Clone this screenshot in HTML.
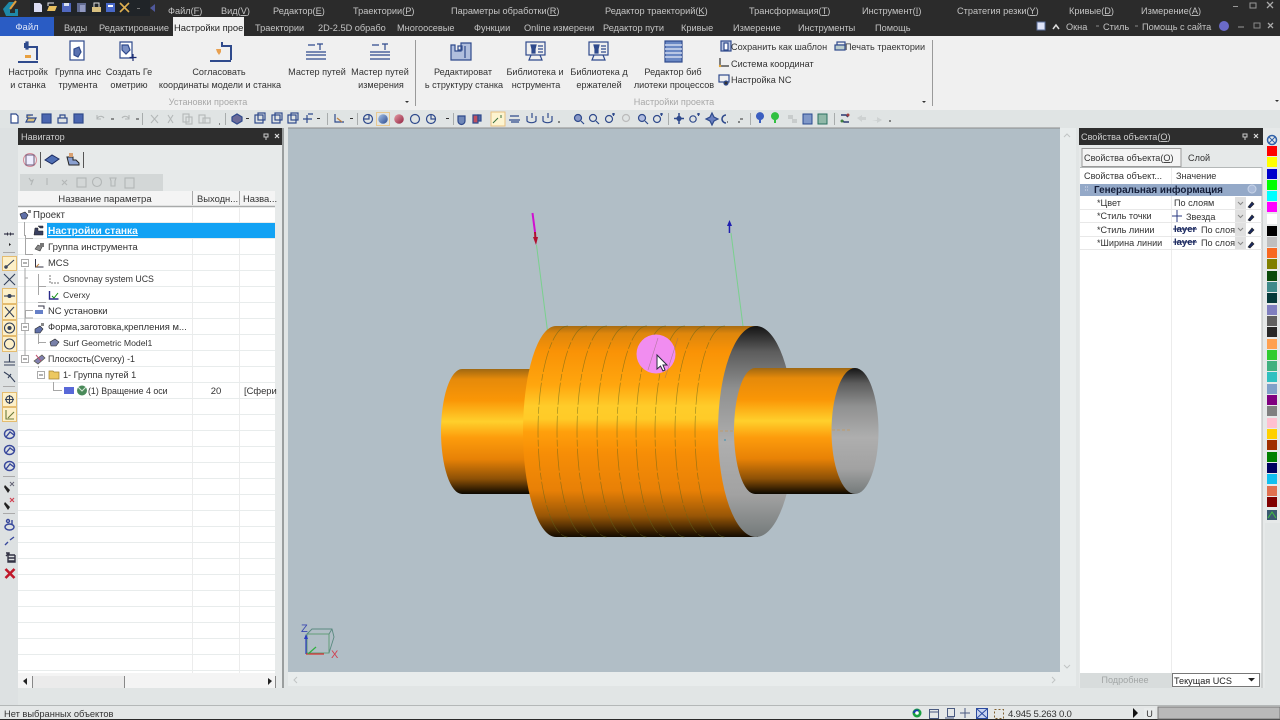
<!DOCTYPE html>
<html><head><meta charset="utf-8"><style>
html,body{margin:0;padding:0;width:1280px;height:720px;overflow:hidden;background:#e1e5e5}
svg{display:block;filter:blur(.35px)}
text{font-family:"Liberation Sans","Noto Sans CJK SC",sans-serif;font-size:9.1px;fill:#333}
.m text{fill:#c4c4c4;font-size:9.2px}
.c{text-anchor:middle}
.ic{fill:none;stroke:#2f4a8c;stroke-width:1.2}
.g{fill:none;stroke:#5a6a8a;stroke-width:1}
.dis{fill:none;stroke:#b4b8b8;stroke-width:1.1}
.u{text-decoration:underline}
</style></head><body>
<svg width="1280" height="720" viewBox="0 0 1280 720" xmlns="http://www.w3.org/2000/svg">
<defs>
<linearGradient id="body" x1="0" y1="0" x2="0" y2="1">
<stop offset="0" stop-color="#a86c12"/><stop offset=".035" stop-color="#de860c"/><stop offset=".12" stop-color="#f99206"/><stop offset=".28" stop-color="#ffa60e"/><stop offset=".38" stop-color="#ffcc2a"/><stop offset=".44" stop-color="#ffcb28"/><stop offset=".5" stop-color="#ffa00c"/><stop offset=".6" stop-color="#f78e06"/><stop offset=".78" stop-color="#e88006"/><stop offset=".9" stop-color="#985606"/><stop offset="1" stop-color="#120a00"/>
</linearGradient>
<linearGradient id="shaft" x1="0" y1="0" x2="0" y2="1">
<stop offset="0" stop-color="#a06812"/><stop offset=".08" stop-color="#e68a0a"/><stop offset=".25" stop-color="#fa9606"/><stop offset=".42" stop-color="#ffd02c"/><stop offset=".55" stop-color="#fd9c0c"/><stop offset=".72" stop-color="#e88206"/><stop offset=".88" stop-color="#8c5006"/><stop offset="1" stop-color="#0c0800"/>
</linearGradient>
<linearGradient id="face" x1="0" y1="0" x2="0" y2="1">
<stop offset="0" stop-color="#141414"/><stop offset=".12" stop-color="#5c5c5c"/><stop offset=".3" stop-color="#8f9090"/><stop offset=".55" stop-color="#aeaeae"/><stop offset=".8" stop-color="#a2a2a2"/><stop offset="1" stop-color="#747a7a"/>
</linearGradient>
<linearGradient id="ball" x1="0" y1="0" x2="1" y2="1"><stop offset="0" stop-color="#aac4e8"/><stop offset="1" stop-color="#2a4a90"/></linearGradient>
<linearGradient id="ball2" x1="0" y1="0" x2="1" y2="1"><stop offset="0" stop-color="#e8a0a8"/><stop offset="1" stop-color="#902040"/></linearGradient>
</defs>

<!-- backgrounds -->
<rect width="1280" height="720" fill="#e1e5e5"/>
<rect width="1280" height="36" fill="#2b2b2b"/>
<rect y="36" width="1280" height="74" fill="#f0f0f0"/>
<rect y="110" width="1280" height="18" fill="#e0e4e4"/>

<!-- title bar -->
<path d="M3 9 L9 2 H16 L10 9 V13 H15 V9 H18 V16 H6 Z" fill="#1e88a8"/>
<path d="M10 9 L16 1" stroke="#e0a040" stroke-width="2"/>
<rect x="30" y="0" width="120" height="16" fill="#202428"/>
<g>
<path d="M34 3 H40 L42 5 V12 H34 Z" fill="#d8dcf4"/>
<path d="M47 11 L49 6 H57 L55 11 Z" fill="#e8c060"/><path d="M48 6 V3 H54" stroke="#e8e8f0" fill="none"/>
<rect x="62" y="3" width="9" height="9" fill="#5068c0"/><rect x="64" y="3" width="5" height="3" fill="#d8e0f0"/>
<rect x="77" y="3" width="9" height="9" fill="#606a90"/><rect x="80" y="5" width="5" height="7" fill="#9098c0"/>
<rect x="92" y="7" width="9" height="5" fill="#d8c080"/><path d="M94 7 V3 H99 V7" stroke="#ddd" fill="none"/>
<rect x="106" y="3" width="9" height="9" fill="#4868c8"/><rect x="108" y="5" width="5" height="2" fill="#fff"/>
<path d="M120 3 L129 12 M129 3 L120 12" stroke="#e0b050" stroke-width="1.6"/>
<path d="M150 8 L155 4 V12 Z" fill="#50589a"/>
</g>
<rect x="137" y="8" width="3" height="1" fill="#777"/>

<g class="m">
<text x="168" y="14">Файл(<tspan class="u">F</tspan>)</text>
<text x="221" y="14">Вид(<tspan class="u">V</tspan>)</text>
<text x="273" y="14">Редактор(<tspan class="u">E</tspan>)</text>
<text x="353" y="14">Траектории(<tspan class="u">P</tspan>)</text>
<text x="451" y="14">Параметры обработки(<tspan class="u">R</tspan>)</text>
<text x="605" y="14">Редактор траекторий(<tspan class="u">K</tspan>)</text>
<text x="749" y="14">Трансформация(<tspan class="u">T</tspan>)</text>
<text x="862" y="14">Инструмент(<tspan class="u">I</tspan>)</text>
<text x="957" y="14">Стратегия резки(<tspan class="u">Y</tspan>)</text>
<text x="1069" y="14">Кривые(<tspan class="u">D</tspan>)</text>
<text x="1141" y="14">Измерение(<tspan class="u">A</tspan>)</text>
<text x="64" y="31">Виды</text>
<text x="99" y="31">Редактирование</text>
<text x="255" y="31">Траектории</text>
<text x="318" y="31">2D-2.5D обрабо</text>
<text x="397" y="31">Многоосевые</text>
<text x="474" y="31">Функции</text>
<text x="524" y="31">Online измерени</text>
<text x="603" y="31">Редактор пути</text>
<text x="681" y="31">Кривые</text>
<text x="733" y="31">Измерение</text>
<text x="798" y="31">Инструменты</text>
<text x="875" y="31">Помощь</text>
<text x="1066" y="30">Окна</text>
<text x="1103" y="30">Стиль</text>
<text x="1142" y="30">Помощь с сайта</text>
</g>
<rect x="0" y="17" width="54" height="19" fill="#2a5cc4"/>
<text x="27" y="30" class="c" style="fill:#dfe6f8;font-size:9.500px">Файл</text>
<rect x="173" y="17" width="71" height="19" fill="#f0f0f0"/>
<text x="174" y="31" style="fill:#222;font-size:9.400px">Настройки прое</text>
<!-- window buttons -->
<path d="M1233 6.5h5" stroke="#999"/><rect x="1250" y="3" width="6" height="5" fill="none" stroke="#999"/>
<path d="M1267 2 l6 6 m0-6 l-6 6" stroke="#aaa" stroke-width="1.3"/>
<rect x="1037" y="22" width="8" height="8" fill="#dfe4f8" stroke="#5a6e9a" stroke-width="1"/>
<path d="M1053 29 l3-4 l3 4" stroke="#ddd" stroke-width="1.5" fill="none"/>
<circle cx="1224" cy="26" r="5" fill="#6a6ac8"/>
<path d="M1238 27h6" stroke="#999"/><rect x="1254" y="23" width="6" height="5" fill="none" stroke="#888"/>
<path d="M1268 23 l5 5 m0-5 l-5 5" stroke="#aaa" stroke-width="1.3"/>
<path d="M1096 26h3M1135 26h3" stroke="#888"/>

<!-- ribbon icons -->
<g class="ic">
<path d="M25 43 V47 H37 V60 M18 62 H38" stroke-width="2"/>
<rect x="25" y="55" width="6" height="3" fill="#e8a040" stroke="none"/><path d="M26 42h2v7h-2z" fill="#2f4a8c"/>
<rect x="70" y="41" width="14" height="19" fill="#fff"/><path d="M74 49 l5-2 l2 5 l-3 5 l-4-2 z" fill="#5a72b0"/>
<path d="M120 42 H132 V58 H120 Z" fill="#fff"/><path d="M122 45 l6 0 l2 5 l-4 4 l-4-4 z" fill="#7a90c4"/><path d="M133 54 v7 M129.500 57.500 h7" stroke="#1a2a70" stroke-width="1.200"/>
<path d="M222 42 V46 H231 V60 M210 61 H231" stroke-width="2"/><path d="M216 49 h5 v3 l-2 3 l-2-3 z" fill="#e8a050" stroke="none"/>
<path d="M308 45 h7 M306 52 h20 M306 55 h20 M306 59 h20 M320 44 v6 M317 44 h6"/>
<path d="M372 45 h7 M370 52 h20 M370 55 h20 M370 59 h20 M385 44 v6 M382 44 h6"/>
<path d="M451 59 V45 h4 v6 h6 v-8 h10 v17 h-20z" fill="#b0bedd"/><path d="M458 46 h4 v4 h-4z M465 46 v12" />
<rect x="526" y="42" width="19" height="13"/><path d="M531 45 h5 l-1 4 v4 h-3 v-4z" fill="#2f4a8c"/><path d="M538 46h5M538 49h5M538 52h5M531 55 l-2 5 h13 l-2-5"/>
<rect x="589" y="42" width="19" height="13"/><path d="M594 45 h5 l-1 4 v4 h-3 v-4z" fill="#2f4a8c"/><path d="M601 46h5M601 49h5M601 52h5M594 55 l-2 5 h13 l-2-5"/>
<rect x="665" y="41" width="17" height="21" fill="#6a88c4"/><path d="M665 45h17M665 49h17M665 53h17M665 57h17" stroke="#e8ecf8"/>
<rect x="721" y="41" width="10" height="10" fill="#b8c4e0"/><rect x="724" y="43" width="4" height="7" fill="#fff"/>
<path d="M720 66 v-8 M720 66 h9" stroke="#333"/><circle cx="720" cy="66" r="1.200" fill="#e0a030" stroke="none"/>
<rect x="719" y="75" width="10" height="7"/><circle cx="726" cy="83" r="2" fill="#333"/>
<rect x="837" y="42" width="8" height="3"/><rect x="835" y="45" width="10" height="5" fill="#bcc"/>
</g>
<g>
<text x="28" y="75" class="c">Настройк</text><text x="28" y="88" class="c">и станка</text>
<text x="78" y="75" class="c">Группа инс</text><text x="78" y="88" class="c">трумента</text>
<text x="129" y="75" class="c">Создать Ге</text><text x="129" y="88" class="c">ометрию</text>
<text x="219" y="75" class="c">Согласовать</text><text x="220" y="88" class="c">координаты модели и станка</text>
<text x="317" y="75" class="c">Мастер путей</text>
<text x="380" y="75" class="c">Мастер путей</text><text x="381" y="88" class="c">измерения</text>
<text x="463" y="75" class="c">Редактироват</text><text x="464" y="88" class="c">ь структуру станка</text>
<text x="535" y="75" class="c">Библиотека и</text><text x="536" y="88" class="c">нструмента</text>
<text x="599" y="75" class="c">Библиотека д</text><text x="599" y="88" class="c">ержателей</text>
<text x="673" y="75" class="c">Редактор биб</text><text x="674" y="88" class="c">лиотеки процессов</text>
<text x="731" y="50">Сохранить как шаблон</text>
<text x="845" y="50">Печать траектории</text>
<text x="731" y="67">Система координат</text>
<text x="731" y="83">Настройка NC</text>
<text x="208" y="105" class="c" style="fill:#a8a8a8">Установки проекта</text>
<text x="674" y="105" class="c" style="fill:#a8a8a8">Настройки проекта</text>
</g>
<path d="M415.500 40 V106 M932.500 40 V106" stroke="#9a9a9a"/>
<path d="M405 101h4l-2 2z M922 101h4l-2 2z M1275 100h4l-2 2z" fill="#333"/>

<!-- toolbar -->
<g class="ic" stroke-width="1.100">
<path d="M11 114 h5 l2 2 v7 h-7z" fill="#fff"/>
<path d="M26 122 l2-4 h8 l-2 4z M27 118 v-3 h6" fill="#d8c080"/>
<rect x="42" y="114" width="9" height="9" fill="#4a66b0"/>
<rect x="58" y="118" width="9" height="5"/><path d="M60 118 v-3 h5 v3"/>
<rect x="74" y="114" width="9" height="9" fill="#4a66b0"/>
<path d="M232 117 l5-3 l5 3 v4 l-5 3 l-5-3z" fill="#6a6a98"/>
<rect x="255" y="115" width="8" height="8"/><rect x="258" y="113" width="7" height="7"/>
<rect x="272" y="115" width="8" height="8"/><rect x="275" y="113" width="7" height="7"/>
<rect x="288" y="115" width="8" height="8"/><rect x="291" y="113" width="7" height="7"/>
<path d="M307 115 v8 M303 119 h9 M308 114 h5"/>
<path d="M335 114 v8 h9"/><path d="M337 118 l5 4" stroke="#c08040"/>
<circle cx="368" cy="119" r="4.500"/><path d="M364 119 h5 v-4"/>
<circle cx="415" cy="119" r="4.500"/>
<circle cx="431" cy="119" r="4.500"/><path d="M431 115 v4 h4"/>
<path d="M458 116 h7 v5 a3 3 0 0 1 -7 0z" fill="#7088b8"/>
<path d="M473 115 h5 v8 h-5z" fill="#c05060"/><path d="M478 115 h3 v6 h-3z" fill="#5068a8"/>
<path d="M510 116 h9 M509 120 h11 M511 122 h8"/>
<path d="M527 116 v5 a5 3 0 0 0 9 0 v-5"/><path d="M532 113 v5"/>
<path d="M543 116 v5 a5 3 0 0 0 9 0 v-5"/><path d="M548 113 v5"/>
<circle cx="578" cy="118" r="3.500" fill="#8898c8"/><path d="M581 121 l3 3"/>
<circle cx="593" cy="118" r="3.500"/><path d="M596 121 l3 3"/>
<circle cx="609" cy="119" r="3.500"/><path d="M612 114 h3 M613.500 113 v3"/>
<circle cx="626" cy="118" r="3.500" stroke="#bbb"/>
<circle cx="642" cy="118" r="3.500" fill="#b0bce0"/><path d="M645 121 l3 3"/>
<circle cx="657" cy="119" r="3.500"/><path d="M660 114 h3 M661.500 113 v3"/>
<path d="M679 113 v11 M674 118.500 h10" stroke-width="1.500"/><circle cx="679" cy="118.500" r="2" fill="#2f4a8c"/>
<circle cx="693" cy="119" r="3.200"/><path d="M697 114 h3 M698.500 113 v3"/>
<path d="M712 113 l2 4 l4 2 l-4 2 l-2 4 l-2-4 l-4-2 l4-2z" fill="#6a80c0"/>
<path d="M726 115 a4 4 0 1 0 0 8" stroke-width="1.600"/>
</g>
<g>
<circle cx="383" cy="119" r="4.800" fill="url(#ball)"/>
<rect x="376.500" y="112.500" width="13" height="13" fill="none" stroke="#e8c890"/>
<circle cx="399" cy="119" r="4.800" fill="url(#ball2)"/>
<rect x="491" y="112" width="14" height="14" fill="#fdf4d0" stroke="#e8c080"/>
<path d="M493 123 l5-5 m3-3 v3" stroke="#3a7040" fill="none"/>
<path d="M759 120 a4 4 0 1 1 2 0 v3 h-2z" fill="#3a5ec0"/>
<path d="M774 120 a4 4 0 1 1 2 0 v3 h-2z" fill="#30c040"/>
<path d="M788 115 h5 v4 h4 v4 h-5 v-4 h-4z" fill="#c8cccc"/>
<rect x="803" y="114" width="9" height="10" fill="#8098c8" stroke="#2a4a90"/>
<rect x="818" y="114" width="9" height="10" fill="#90b8a8" stroke="#2a7060"/>
<path d="M841 115 h5 l2 2 M849 122 h-5 l-2-2" stroke="#2a3a70" fill="none" stroke-width="1.500"/><circle cx="842" cy="121" r="1.500" fill="#408040"/><circle cx="848" cy="115" r="1.500" fill="#a04040"/>
<path d="M857 118 l5-3 v2 h4 v3 h-4 v2z M872 120 h5 v-3 l5 3 l-5 3 v-2z" fill="#ced2d2"/>
</g>
<g class="dis">
<path d="M97 119 a4 4 0 0 1 7 -1 M97 115 v4 h4"/><path d="M129 119 a4 4 0 0 0 -7 -1 M129 115 v4 h-4"/>
<path d="M151 115 l7 8 m0-8 l-7 8"/><path d="M168 115 l5 8 m0-8 l-5 8"/>
<rect x="183" y="114" width="6" height="8"/><rect x="186" y="117" width="6" height="7"/>
<rect x="199" y="115" width="6" height="8"/><rect x="203" y="118" width="7" height="5"/>
</g>
<path d="M219 124h1M246 118.500h3M317 118.500h3M350 118.500h3M446 118.500h3M111 119h3M136 119h3M740 119h3" stroke="#333"/>
<path d="M558 122h2M727 122h1M738 122h2M889 121h2" stroke="#222"/>
<path d="M142.500 113 V125 M225.500 113 V125 M327.500 113 V125 M357.500 113 V125 M453.500 113 V125 M668.500 113 V125 M750.500 113 V125 M834.500 113 V125" stroke="#a8acac"/>

<!-- left vertical toolbar -->
<g>
<rect x="0" y="128" width="18" height="577" fill="#dde1e2"/>
<path d="M4 234 h3 M11 234 h3" stroke="#556" stroke-width="1.500"/><path d="M7 232 l2 2 l-2 2z M11 232 l-2 2 l2 2z" fill="#334"/>
<path d="M9 243 l2 1.500 l-2 1.500z" fill="#222"/><path d="M3 252.500h12" stroke="#aaa"/>
<g fill="#fdf0c8" stroke="#e4bc70"><rect x="2.500" y="256.500" width="14" height="14"/><rect x="2.500" y="288.500" width="14" height="15"/><rect x="2.500" y="304.500" width="14" height="15"/><rect x="2.500" y="320.500" width="14" height="15"/><rect x="2.500" y="336.500" width="14" height="15"/><rect x="2.500" y="392.500" width="14" height="14"/><rect x="2.500" y="407.500" width="14" height="14"/></g>
<g fill="none" stroke="#33405a" stroke-width="1.100">
<path d="M5 268 L14 260"/><circle cx="6" cy="267" r="1.200"/>
<path d="M4 274 L15 285 M4 285 L15 274" /><path d="M4 296 h11"/><circle cx="9.500" cy="296" r="1.500" fill="#33405a"/>
<path d="M5 307 L14 317 M14 307 L5 317"/>
<circle cx="9.500" cy="328" r="5"/><circle cx="9.500" cy="328" r="1.500" fill="#33405a"/>
<circle cx="9.500" cy="344" r="5"/>
<path d="M9.500 354 v8 M4 362 h11 M4 365 h11"/><path d="M4 372 l6 4 l5 6 M8 378 l3-4" />
<circle cx="9.500" cy="399.500" r="3.500"/><path d="M9.500 395 v9 M5 399.500 h9"/>
<path d="M6 410 v9 h8 M8 418 l6-6" stroke="#6a7a3a"/>
</g>
<path d="M3 386.500h12M3 476.500h12M3 513.500h12" stroke="#aaa"/>
<g fill="none" stroke="#38489c" stroke-width="1.400">
<ellipse cx="9.500" cy="434" rx="5" ry="4.500"/><path d="M6 437 l4-5 l4 3"/>
<ellipse cx="9.500" cy="450" rx="5" ry="4.500"/><path d="M6 453 l4-5 l4 3"/>
<ellipse cx="9.500" cy="466" rx="5" ry="4.500"/><path d="M6 469 l4-5 l4 3"/>
<ellipse cx="9.500" cy="527" rx="4.500" ry="3"/><circle cx="8" cy="521" r="1.500"/><path d="M12 520 v4" />
<path d="M5 545 l3 -3 m2 -2 l4 -3"/><path d="M6 553 h3 v2 M9 553 l-3 3" stroke="#334"/><path d="M8 555 h7 M8 558 h7 M8 561 h7 M8 555 V562 H15 V555" stroke="#334"/>
</g>
<path d="M5 485 l5 5 l-2 3 l-4-6z M5 502 l5 5 l-2 3 l-4-6z" fill="#222"/>
<path d="M10 482 l4 4 m0-4 l-4 4" stroke="#667"/><path d="M10 498 l4 4 m0-4 l-4 4" stroke="#d04050" stroke-width="1.200"/>
<path d="M5.500 569 l9 9 m0-9 l-9 9" stroke="#c0182a" stroke-width="2.600"/>
</g>

<!-- Navigator panel -->
<rect x="18" y="128" width="266" height="17" fill="#2d2d2d"/>
<text x="21" y="140" style="fill:#cfcfcf">Навигатор</text>
<path d="M264 134 h4 v3 h-4z M266 137 v3" stroke="#ccc" fill="none"/><path d="M275 134 l4 4 m0-4 l-4 4" stroke="#ddd" stroke-width="1.200"/>
<rect x="18" y="145" width="266" height="543" fill="#e7eaea"/>
<path d="M283 128 V688" stroke="#9a9e9e" stroke-width="2"/>
<g>
<circle cx="30" cy="160" r="6.500" fill="none" stroke="#d88a9a"/><rect x="26" y="155" width="8" height="10" fill="#eef" stroke="#6a5a7a"/>
<path d="M40.500 152 V168" stroke="#555"/>
<path d="M45 160 l7-5 l7 4 l-7 5z" fill="#4f6fb4" stroke="#1a2a60"/>
<path d="M67 157 h6 v3 h3 l3 3 v2 h-10z" fill="#8aa0d0" stroke="#222"/><rect x="69" y="153" width="4" height="4" fill="#d8a070"/>
<path d="M83.500 152 V168" stroke="#555"/>
</g>
<rect x="20" y="174" width="143" height="17" fill="#d3d7d7"/>
<g fill="none" stroke="#b2b6b6" stroke-width="1.100">
<path d="M29 178 l2 3 l2-1 l-2 5" /><path d="M47 178 v7"/><path d="M62 180 l5 5 m0-5 l-5 5"/><rect x="77" y="178" width="9" height="9"/><circle cx="97" cy="182" r="4.500"/><path d="M110 178 h6 l-1 3 v5 h-4 v-5z"/><rect x="125" y="178" width="9" height="10"/>
</g>
<rect x="18" y="191" width="257" height="482" fill="#fff"/>
<rect x="18" y="191" width="257" height="15" fill="#f4f4f4"/>
<path d="M18 206.500H275" stroke="#a8aaaa" stroke-width="1.500"/>
<path d="M192.500 191V205M239.500 191V205" stroke="#aaa"/>
<path d="M192.500 207V673M239.500 207V673" stroke="#ececec"/>
<g stroke="#e8ecec">
<path d="M18 222.500H275M18 238.500H275M18 254.500H275M18 270.500H275M18 286.500H275M18 302.500H275M18 318.500H275M18 334.500H275M18 350.500H275M18 366.500H275M18 382.500H275M18 398.500H275M18 414.500H275M18 430.500H275M18 446.500H275M18 462.500H275M18 478.500H275M18 494.500H275M18 510.500H275M18 526.500H275M18 542.500H275M18 558.500H275M18 574.500H275M18 590.500H275M18 606.500H275M18 622.500H275M18 638.500H275M18 654.500H275M18 670.500H275"/>
</g>
<text x="105" y="202" class="c" style="font-size:9.600px">Название параметра</text>
<text x="197" y="202" style="font-size:9.400px">Выходн...</text>
<text x="243" y="202" style="font-size:9.400px">Назва...</text>
<rect x="47" y="223" width="228" height="15" fill="#12a2f4"/>
<path d="M24.500 222 V236M26 238.500H33M26 254.500H33M25 268V360M25.500 278H28M38.500 274V295M38 286.500H46M38 302.500H46M25.500 318H33M25.500 318.500V310.500H33M38.500 334V344M38 342.500H46M38.500 366V368M53.500 382V391M53 390.500H62" stroke="#a6a6a6" fill="none"/>
<path d="M25.500 235V255" stroke="#a6a6a6"/>
<g>
<rect x="21.500" y="259.500" width="7" height="7" fill="#fff" stroke="#aaa"/><path d="M23 263h4" stroke="#666"/>
<rect x="21.500" y="323.500" width="7" height="7" fill="#fff" stroke="#aaa"/><path d="M23 327h4" stroke="#666"/>
<rect x="21.500" y="355.500" width="7" height="7" fill="#fff" stroke="#aaa"/><path d="M23 359h4" stroke="#666"/>
<rect x="37.500" y="371.500" width="7" height="7" fill="#fff" stroke="#aaa"/><path d="M39 375h4" stroke="#666"/>
</g>
<g>
<path d="M20 214 l5-2 l3 3 l-2 4 h-4z" fill="#6070a8" stroke="#222" stroke-width=".6"/><rect x="28" y="210" width="3" height="3" fill="#888"/>
<path d="M35 228 h3 v3 h5 v4 h-9z M38 226 h5 v2 h-3z" fill="#3a4060" stroke="#222" stroke-width=".5"/>
<path d="M35 249 l3-4 l4 2 l-2 4z" fill="#888" stroke="#333" stroke-width=".6"/><rect x="40" y="243" width="4" height="4" fill="#777"/>
<path d="M35.500 259 v8 h8" stroke="#334" fill="none"/><path d="M36 267 l3-3" stroke="#c08040"/>
<path d="M50 275 v8 h9" stroke="#777" fill="none" stroke-dasharray="2 1"/>
<path d="M49.500 291 v8 h9" stroke="#2a2a8a" fill="none" stroke-width="1.400"/><path d="M52 296 l2 2 l4-5" stroke="#109010" fill="none"/>
<path d="M35 310 h8 v4 h-8z" fill="#6680c8"/><path d="M38 306 h6 v3" stroke="#334" fill="none"/>
<path d="M35 329 l5-3 l3 3 l-3 4 h-5z" fill="#6070a8" stroke="#222" stroke-width=".6"/><rect x="41" y="323" width="3" height="3" fill="#888"/>
<path d="M50 342 l5-3 l4 3 l-3 4 h-5z" fill="#7880a8" stroke="#222" stroke-width=".6"/>
<path d="M34 361 l8-6 l3 3 l-7 6z" fill="#8080b0" stroke="#554" stroke-width=".7"/><path d="M36 355 l5 6" stroke="#c05070"/>
<path d="M49 371 h4 l1 1 h5 v7 h-10z" fill="#ecc860" stroke="#a08030" stroke-width=".7"/>
<rect x="64" y="387" width="10" height="7" fill="#5868d8"/>
<circle cx="82" cy="390.500" r="5" fill="#4a8a5a"/><path d="M78 387 l4 4 l4-4" stroke="#d8e8d8" fill="none"/>
</g>
<text x="33" y="218" style="font-size:9.700px">Проект</text>
<text x="48" y="234" class="u" style="fill:#f4fbff;font-weight:bold;font-size:10.200px">Настройки станка</text>
<text x="48" y="250" style="font-size:9.600px">Группа инструмента</text>
<text x="48" y="266" style="font-size:9.400px">MCS</text>
<text x="63" y="282" style="font-size:8.800px">Osnovnay system UCS</text>
<text x="63" y="298" style="font-size:8.700px">Cverxy</text>
<text x="48" y="314" style="font-size:9.400px">NC установки</text>
<text x="48" y="330" style="font-size:9.400px">Форма,заготовка,крепления м...</text>
<text x="63" y="346" style="font-size:8.700px">Surf Geometric Model1</text>
<text x="48" y="362" style="font-size:8.900px">Плоскость(Cverxy) -1</text>
<text x="63" y="378">1- Группа путей 1</text>
<text x="88" y="394" style="font-size:8.800px">(1) Вращение 4 оси</text>
<text x="216" y="394" class="c" style="font-size:9.500px">20</text>
<text x="244" y="394" style="font-size:9.400px">[Сфери</text>
<!-- nav scrollbar -->
<rect x="18" y="673" width="257" height="15" fill="#f4f4f4"/>
<path d="M23 681 l4-3 v7z M272 681 l-4-3 v7z" fill="#222"/>
<path d="M32.500 676V688M124.500 676V688M275.500 676V688" stroke="#888"/>
<rect x="33" y="676" width="91" height="12" fill="#ebebeb"/>

<!-- viewport -->
<rect x="288" y="128" width="772" height="544" fill="#b1bec6"/>
<path d="M288 128h772" stroke="#8c8c8c"/>
<rect x="1060" y="128" width="16" height="544" fill="#e8ecec"/>
<rect x="288" y="672" width="788" height="14" fill="#e8ecec"/>
<path d="M1064 137 l3-3 l3 3 M1064 665 l3 3 l3-3 M297 677 l-3 3 l3 3 M1052 677 l3 3 l-3 3" stroke="#c0c4c4" fill="none"/>

<!-- model -->
<path d="M536.500 245 L547.500 331 M731 233 L743 326" stroke="#7ad08e" stroke-width="1"/>
<path d="M532.500 213 L535 232" stroke="#d010d0" stroke-width="2"/>
<path d="M535 232 L535.500 240" stroke="#b01030" stroke-width="2"/>
<path d="M533 237 h5 l-2 8z" fill="#b01030"/>
<path d="M729.500 220 l2.500 6 h-1.800 v7 h-1.500 v-7 h-1.700z" fill="#2020b0"/>

<path d="M462 369 H540 V494 H462 A21 62.500 0 0 1 462 369Z" fill="url(#shaft)"/>
<path d="M556 326 H758 V537 H556 A33 105.500 0 0 1 556 326Z" fill="url(#body)"/>
<ellipse cx="756" cy="431.500" rx="38" ry="105.500" fill="url(#face)"/>
<g fill="none" stroke="#62641c" stroke-width=".7" stroke-dasharray="22 2 7 2" opacity=".6">
<path d="M568 326 A30 105.500 0 0 0 568 537"/>
<path d="M587 326 A30 105.500 0 0 0 587 537"/>
<path d="M607 326 A30 105.500 0 0 0 607 537"/>
<path d="M627 326 A30 105.500 0 0 0 627 537"/>
<path d="M647 326 A30 105.500 0 0 0 647 537"/>
<path d="M666 326 A30 105.500 0 0 0 666 537"/>
<path d="M685 326 A30 105.500 0 0 0 685 537"/>
<path d="M705 326 A30 105.500 0 0 0 705 537"/>
<path d="M725 326 A30 105.500 0 0 0 725 537"/>
</g>
<circle cx="656" cy="354" r="19.500" fill="#f18df0"/>
<path d="M658 338 L648 370 M678 338 L665 378" stroke="#8c6a70" stroke-width=".6" opacity=".6" fill="none"/>
<path d="M657 355 V369 L660.500 366 L663 371 L665 370 L663 365 L667 365Z" fill="#fff" stroke="#2a2a40" stroke-width="1"/>

<path d="M755 368 H855 V494 H755 A21 63 0 0 1 755 368Z" fill="url(#shaft)"/>
<ellipse cx="855" cy="431" rx="23.500" ry="63" fill="url(#face)"/>
<path d="M720 431 H735 M832 430 H852" stroke="#c89858" stroke-width=".7" stroke-dasharray="3 2"/>
<circle cx="725" cy="440" r="1" fill="#5f9ab0"/>

<!-- axes -->
<g fill="none" stroke="#5a8a80" stroke-width=".9">
<rect x="307" y="634" width="22" height="19" stroke="#5a9a70"/>
<path d="M307 634 l5-5 h20 l2 8 l-5 16 M329 634 l3-5" />
</g>
<path d="M306 636 V654" stroke="#2a3ac0" stroke-width="1.200"/><path d="M306 634 l2 5 h-4z" fill="#2a3ac0"/>
<path d="M306 654 H324" stroke="#d83030" stroke-width="1.200"/><path d="M308 654 l8-7" stroke="#30b040" stroke-width="1.200"/>
<text x="301" y="632" style="fill:#3a48b0;font-size:11px">Z</text>
<text x="331" y="658" style="fill:#d04050;font-size:11px">X</text>

<!-- properties panel -->
<rect x="1079" y="128" width="186" height="560" fill="#e6e9e9"/>
<rect x="1079" y="128" width="184" height="17" fill="#2d2d2d"/>
<text x="1081" y="140" style="fill:#cfcfcf">Свойства объекта(<tspan class="u">O</tspan>)</text>
<path d="M1243 134 h4 v3 h-4z M1245 137 v3" stroke="#ccc" fill="none"/><path d="M1254 134 l4 4 m0-4 l-4 4" stroke="#ddd" stroke-width="1.200"/>
<rect x="1082" y="148.500" width="99" height="18" fill="#f4f4f4" stroke="#9a9a9a"/>
<text x="1084" y="161" style="fill:#333">Свойства объекта(<tspan class="u">O</tspan>)</text>
<text x="1188" y="161">Слой</text>
<rect x="1080" y="167" width="182" height="506" fill="#fff"/>
<path d="M1080 167.500H1262 M1262 167V688" stroke="#b4b8b8"/>
<text x="1084" y="179">Свойства объект...</text>
<text x="1176" y="179">Значение</text>
<path d="M1171.500 168V673" stroke="#ececec"/>
<rect x="1080" y="184" width="182" height="12" fill="#94a9c8"/>
<text x="1094" y="193" style="fill:#141e3a;font-weight:bold;font-size:9.900px">Генеральная информация</text>
<circle cx="1252" cy="189" r="4" fill="#a9bad8" stroke="#c8d4e8"/>
<path d="M1085 187h1M1087 187h1M1085 190h1M1087 190h1" stroke="#dde"/>
<path d="M1080 209.500H1262M1080 222.500H1262M1080 236.500H1262M1080 249.500H1262" stroke="#e8e8e8"/>
<text x="1097" y="206">*Цвет</text><text x="1174" y="206">По слоям</text>
<text x="1097" y="219">*Стиль точки</text><text x="1186" y="220">Звезда</text>
<text x="1097" y="233">*Стиль линии</text><text x="1201" y="233">По слоя</text>
<text x="1097" y="246">*Ширина линии</text><text x="1201" y="246">По слоя</text>
<path d="M1177 210 v12 M1172 216 h10" stroke="#2a3a80"/>
<text x="1174" y="232" style="fill:#1c2a60;font-weight:bold;font-size:9.500px">layer</text>
<text x="1174" y="245" style="fill:#1c2a60;font-weight:bold;font-size:9.500px">layer</text>
<path d="M1173 229h24M1173 242h24" stroke="#1c2a60"/>
<g><rect x="1235" y="197" width="11" height="12" fill="#e0e0e0"/><rect x="1235" y="210" width="11" height="12" fill="#e0e0e0"/><rect x="1235" y="223" width="11" height="13" fill="#e0e0e0"/><rect x="1235" y="237" width="11" height="12" fill="#e0e0e0"/>
<path d="M1238 202 l2.500 2.500 l2.500 -2.500 M1238 215 l2.500 2.500 l2.500 -2.500 M1238 228 l2.500 2.500 l2.500 -2.500 M1238 242 l2.500 2.500 l2.500 -2.500" stroke="#888" fill="none"/></g>
<path d="M1248 207 l4-5 l2 2 l-4 4z M1248 220 l4-5 l2 2 l-4 4z M1248 233 l4-5 l2 2 l-4 4z M1248 247 l4-5 l2 2 l-4 4z" fill="#1a2a60" stroke="#222" stroke-width=".6"/>
<rect x="1080" y="673" width="92" height="15" fill="#d8dcdc"/>
<text x="1125" y="683" class="c" style="fill:#a2a6a6">Подробнее</text>
<rect x="1172.500" y="673.500" width="87" height="13" fill="#fff" stroke="#777"/>
<text x="1174" y="684" style="fill:#222">Текущая UCS</text>
<path d="M1248 678 h7 l-3.500 3.500z" fill="#222"/>

<!-- palette -->
<rect x="1265" y="128" width="15" height="395" fill="#e6e9e9"/>
<circle cx="1272" cy="140" r="4.500" fill="none" stroke="#3060a8" stroke-width="1.500"/>
<path d="M1269 137 l6 6 m0-6 l-6 6" stroke="#3060a8"/>
<g>
<rect x="1267" y="146" width="10" height="10" fill="#f00"/>
<rect x="1267" y="157" width="10" height="10" fill="#ff0"/>
<rect x="1267" y="169" width="10" height="10" fill="#00c"/>
<rect x="1267" y="180" width="10" height="10" fill="#0f0"/>
<rect x="1267" y="191" width="10" height="10" fill="#0ff"/>
<rect x="1267" y="202" width="10" height="10" fill="#f0f"/>
<rect x="1267" y="214" width="10" height="10" fill="#fff"/>
<rect x="1267" y="226" width="10" height="10" fill="#000"/>
<rect x="1267" y="237" width="10" height="10" fill="#bfbfbf"/>
<rect x="1267" y="248" width="10" height="10" fill="#f86820"/>
<rect x="1267" y="259" width="10" height="10" fill="#808000"/>
<rect x="1267" y="271" width="10" height="10" fill="#0a4a0a"/>
<rect x="1267" y="282" width="10" height="10" fill="#3f8a8a"/>
<rect x="1267" y="293" width="10" height="10" fill="#063a3a"/>
<rect x="1267" y="305" width="10" height="10" fill="#7f7fbf"/>
<rect x="1267" y="316" width="10" height="10" fill="#606060"/>
<rect x="1267" y="327" width="10" height="10" fill="#282828"/>
<rect x="1267" y="339" width="10" height="10" fill="#ffa050"/>
<rect x="1267" y="350" width="10" height="10" fill="#30cc30"/>
<rect x="1267" y="361" width="10" height="10" fill="#40b080"/>
<rect x="1267" y="372" width="10" height="10" fill="#30c0c0"/>
<rect x="1267" y="384" width="10" height="10" fill="#80a0c8"/>
<rect x="1267" y="395" width="10" height="10" fill="#800080"/>
<rect x="1267" y="406" width="10" height="10" fill="#808080"/>
<rect x="1267" y="418" width="10" height="10" fill="#ffc0d0"/>
<rect x="1267" y="429" width="10" height="10" fill="#ffd000"/>
<rect x="1267" y="440" width="10" height="10" fill="#a03000"/>
<rect x="1267" y="452" width="10" height="10" fill="#008000"/>
<rect x="1267" y="463" width="10" height="10" fill="#000060"/>
<rect x="1267" y="474" width="10" height="10" fill="#10c0f0"/>
<rect x="1267" y="486" width="10" height="10" fill="#e07050"/>
<rect x="1267" y="497" width="10" height="10" fill="#800000"/>
<rect x="1267" y="510" width="10" height="10" fill="#3a5a70"/><path d="M1268 518 l4-6 l4 6" stroke="#40c040" fill="none"/>
</g>

<!-- status bar -->
<path d="M0 705.500H1280" stroke="#b4b8b8"/>
<rect x="0" y="706" width="1280" height="13" fill="#e4e7e7"/>
<rect x="0" y="719" width="1280" height="1" fill="#2a2a2a"/>
<text x="4" y="717" style="fill:#333;font-size:9.300px">Нет выбранных объектов</text>
<circle cx="917" cy="713" r="4.500" fill="#18a040"/><path d="M913 713 a4 4 0 0 1 6 -3 l-2 3z" fill="#1a3ab0"/><circle cx="917" cy="713" r="1.800" fill="#fff"/>
<g fill="none" stroke="#4a5a80">
<rect x="929.500" y="709.500" width="9" height="9"/><path d="M930 712h8"/>
<rect x="947.500" y="708.500" width="7" height="8"/><path d="M945 718h9"/>
<path d="M965 708v10M960 713h10"/>
<rect x="976.500" y="708.500" width="11" height="10" fill="#c8d4f0" stroke="#2a4aa0"/><path d="M977 709l10 9m0-9l-10 9" stroke="#2a4aa0"/>
<rect x="994.500" y="709.500" width="9" height="9" stroke="#806030" stroke-dasharray="2 2"/>
</g>
<text x="1008" y="717" style="fill:#333;letter-spacing:-.2px;font-size:9.600px">4.945 5.263 0.0</text>
<path d="M1133 708l5 5l-5 5z" fill="#111"/>
<rect x="1144" y="708" width="11" height="11" fill="#e8ebeb"/>
<text x="1149.500" y="717" class="c">U</text>
<rect x="1158" y="707" width="122" height="12" fill="#b9b9b9" stroke="#777"/>
</svg>
</body></html>
